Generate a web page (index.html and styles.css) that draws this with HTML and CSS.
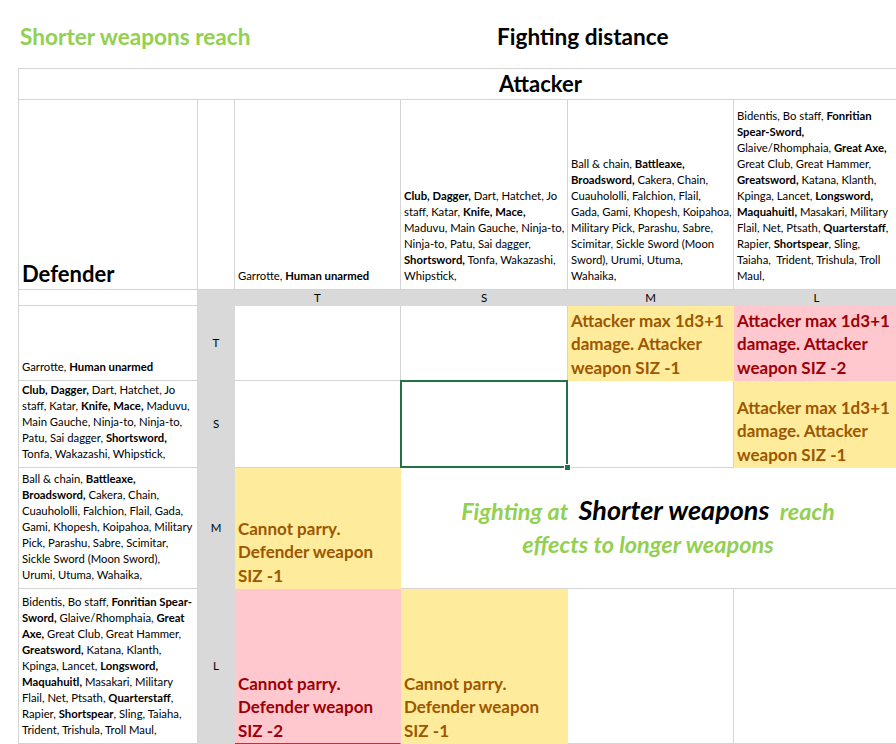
FILE: index.html
```html
<!DOCTYPE html>
<html lang="en">
<head>
<meta charset="utf-8">
<title>Fighting distance – Shorter weapons reach</title>
<link rel="stylesheet" href="styles.css">
</head>
<body>
<div class="page">
  <header class="titles">
    <h1 class="title title-green">Shorter weapons reach</h1>
    <h1 class="title">Fighting distance</h1>
  </header>

  <div class="sheet">
    <!-- row 1 -->
    <div class="c span-all attacker">Attacker</div>

    <!-- row 2: attacker weapon groups -->
    <div class="c defender">Defender</div>
    <div class="c"></div>
    <div class="c list"><div class="t">Garrotte, <b>Human unarmed</b></div></div>
    <div class="c list"><div class="t"><b>Club, Dagger,</b> Dart, Hatchet, Jo<br>staff, Katar, <b>Knife, Mace,</b><br>Maduvu, Main Gauche, Ninja-to,<br>Ninja-to, Patu, Sai dagger,<br><b>Shortsword,</b> Tonfa, Wakazashi,<br>Whipstick,</div></div>
    <div class="c list"><div class="t">Ball &amp; chain, <b>Battleaxe,</b><br><b>Broadsword,</b> Cakera, Chain,<br>Cuauhololli, Falchion, Flail,<br>Gada, Gami, Khopesh, Koipahoa,<br>Military Pick, Parashu, Sabre,<br>Scimitar, Sickle Sword (Moon<br>Sword), Urumi, Utuma,<br>Wahaika,</div></div>
    <div class="c list"><div class="t">Bidentis, Bo staff, <b>Fonritian</b><br><b>Spear-Sword,</b><br>Glaive/Rhomphaia, <b>Great Axe,</b><br>Great Club, Great Hammer,<br><b>Greatsword,</b> Katana, Klanth,<br>Kpinga, Lancet, <b>Longsword,</b><br><b>Maquahuitl,</b> Masakari, Military<br>Flail, Net, Ptsath, <b>Quarterstaff</b>,<br>Rapier, <b>Shortspear</b>, Sling,<br>Taiaha,&nbsp; Trident, Trishula, Troll<br>Maul,</div></div>

    <!-- row 3: reach header -->
    <div class="c"></div>
    <div class="c g"></div>
    <div class="c g lbl">T</div>
    <div class="c g lbl">S</div>
    <div class="c g lbl">M</div>
    <div class="c g lbl">L</div>

    <!-- row T -->
    <div class="c list"><div class="t">Garrotte, <b>Human unarmed</b></div></div>
    <div class="c g lbl">T</div>
    <div class="c"></div>
    <div class="c"></div>
    <div class="c big y"><div class="t">Attacker max 1d3+1<br>damage. Attacker<br>weapon SIZ -1</div></div>
    <div class="c big p"><div class="t">Attacker max 1d3+1<br>damage. Attacker<br>weapon SIZ -2</div></div>

    <!-- row S -->
    <div class="c list"><div class="t"><b>Club, Dagger,</b> Dart, Hatchet, Jo<br>staff, Katar, <b>Knife, Mace,</b> Maduvu,<br>Main Gauche, Ninja-to, Ninja-to,<br>Patu, Sai dagger, <b>Shortsword,</b><br>Tonfa, Wakazashi, Whipstick,</div></div>
    <div class="c g lbl">S</div>
    <div class="c"></div>
    <div class="c sel"></div>
    <div class="c"></div>
    <div class="c big y"><div class="t">Attacker max 1d3+1<br>damage. Attacker<br>weapon SIZ -1</div></div>

    <!-- row M -->
    <div class="c list"><div class="t">Ball &amp; chain, <b>Battleaxe,</b><br><b>Broadsword,</b> Cakera, Chain,<br>Cuauhololli, Falchion, Flail, Gada,<br>Gami, Khopesh, Koipahoa, Military<br>Pick, Parashu, Sabre, Scimitar,<br>Sickle Sword (Moon Sword),<br>Urumi, Utuma, Wahaika,</div></div>
    <div class="c g lbl">M</div>
    <div class="c big y"><div class="t">Cannot parry.<br>Defender weapon<br>SIZ -1</div></div>
    <div class="c merge">
      <p class="note"><span class="note-green">Fighting at</span>&nbsp; <span class="note-black">Shorter weapons</span>&nbsp; <span class="note-green">reach</span></p>
      <p class="note note-green">effects to longer weapons</p>
    </div>

    <!-- row L -->
    <div class="c list"><div class="t">Bidentis, Bo staff, <b>Fonritian Spear-</b><br><b>Sword,</b> Glaive/Rhomphaia, <b>Great</b><br><b>Axe,</b> Great Club, Great Hammer,<br><b>Greatsword,</b> Katana, Klanth,<br>Kpinga, Lancet, <b>Longsword,</b><br><b>Maquahuitl,</b> Masakari, Military<br>Flail, Net, Ptsath, <b>Quarterstaff</b>,<br>Rapier, <b>Shortspear</b>, Sling, Taiaha,<br>Trident, Trishula, Troll Maul,</div></div>
    <div class="c g lbl">L</div>
    <div class="c big p last-p"><div class="t">Cannot parry.<br>Defender weapon<br>SIZ -2</div></div>
    <div class="c big y"><div class="t">Cannot parry.<br>Defender weapon<br>SIZ -1</div></div>
    <div class="c"></div>
    <div class="c"></div>
  </div>
</div>
</body>
</html>
```

FILE: styles.css
```css
html, body {
  margin: 0;
  padding: 0;
  overflow: hidden;
  background: #ffffff;
}

body {
  font-family: Lato, "Open Sans", "Liberation Sans", sans-serif;
  color: #000000;
}

.page {
  width: 896px;
  height: 744px;
  overflow: hidden;
}

/* ---------- titles ---------- */
.titles {
  height: 68px;
  display: grid;
  grid-template-columns: 477px auto;
  align-items: center;
  padding: 6px 0 0 20px;
  box-sizing: border-box;
}

.title {
  margin: 0;
  font-size: 22.6px;
  font-weight: 700;
  line-height: 1;
  white-space: nowrap;
}

.title-green {
  color: #92d050;
}

/* ---------- sheet grid ---------- */
.sheet {
  margin-left: 18px;
  display: grid;
  grid-template-columns: 179px 37px 166px 167px 166px 166px;
  grid-template-rows: 31px 190px 16px 75px 87px 121px 155px;
  width: max-content;
  border-top: 1px solid #d4d4d4;
  border-left: 1px solid #d4d4d4;
}

.c {
  box-sizing: border-box;
  border-right: 1px solid #d4d4d4;
  border-bottom: 1px solid #d4d4d4;
  display: flex;
  flex-direction: column;
  justify-content: flex-end;
  padding: 0 3px 5px 3px;
  overflow: hidden;
  white-space: nowrap;
  min-width: 0;
}

.span-all {
  grid-column: 1 / -1;
}

.attacker {
  font-size: 22px;
  font-weight: 700;
  justify-content: center;
  padding: 0 0 0 480px;
  line-height: 1;
}

.defender {
  font-size: 22px;
  font-weight: 700;
  line-height: 1;
  padding-bottom: 4px;
}

.list {
  font-size: 11.3px;
  line-height: 16px;
}

.list b {
  font-weight: 700;
}

/* gray reach labels */
.g {
  background: #d9d9d9;
  border-color: #d9d9d9;
}

.lbl {
  font-size: 11.5px;
  line-height: 14px;
  justify-content: center;
  align-items: center;
  padding: 0;
}

/* coloured result cells */
.big {
  font-size: 17px;
  font-weight: 700;
  line-height: 23.5px;
  padding-bottom: 1px;
}

.y {
  background: #ffeb9c;
  border-color: #ffeb9c;
  color: #9c5700;
}

.p {
  background: #ffc7ce;
  border-color: #ffc7ce;
  color: #9c0006;
}

.last-p {
  border-bottom-color: #d02a2a;
}

/* selected cell */
.sel {
  position: relative;
  overflow: visible;
}

.sel::after {
  content: "";
  position: absolute;
  left: -1px;
  top: -1px;
  right: -1px;
  bottom: -1px;
  border: 2px solid #217346;
}

.sel::before {
  content: "";
  position: absolute;
  right: -4px;
  bottom: -4px;
  width: 5px;
  height: 5px;
  background: #217346;
  border: 1px solid #ffffff;
  z-index: 2;
}

/* merged note cell */
.merge {
  grid-column: span 3;
  justify-content: center;
  align-items: center;
  padding: 0 4px 2px 0;
  text-align: center;
}

.note {
  margin: 0;
  font-style: italic;
  font-weight: 700;
  font-size: 23.5px;
  line-height: 33px;
}

.note-green {
  color: #92d050;
}

.note-black {
  color: #000000;
  font-size: 27px;
}
```
